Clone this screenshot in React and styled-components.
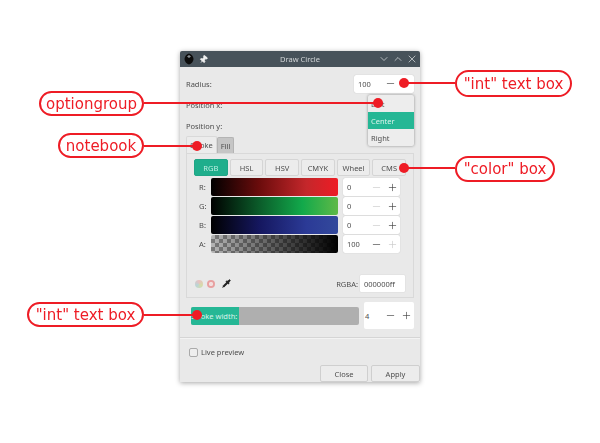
import React from "react";
import styled, { createGlobalStyle } from "styled-components";
import { Minus, Plus, ChevronDown, ChevronUp, X, Pin, Pipette } from "lucide-react";

const Global = createGlobalStyle`
  html, body { margin: 0; padding: 0; background: #fff; }
  body { font-family: "Noto Sans", sans-serif; }
`;
const Page = styled.div`
  position: relative; width: 600px; height: 443px; overflow: hidden; background: #fff;
  padding: 51px 0 0 180px; box-sizing: border-box;
`;
const Win = styled.div`
  width: 240px; height: 331px; background: #e9e9e9; color: #4e4e4e; font-size: 7.5px;
  box-shadow: 0 1px 5px rgba(0,0,0,.35); border-radius: 2px 2px 0 0;
  display: flex; flex-direction: column; filter: blur(.25px);
`;
const TitleBar = styled.div`
  height: 16px; flex: none; background: #47525a; color: #d3d6d8; display: grid;
  grid-template-columns: 60px 1fr 60px; align-items: center; border-radius: 2px 2px 0 0;
`;
const TitleLeft = styled.div`display: flex; align-items: center; gap: 5px; padding-left: 4px; color: #f2f2f2;`;
const Title = styled.div`text-align: center;`;
const TitleRight = styled.div`display: flex; justify-content: flex-end; gap: 2px; padding-right: 2px; color: #e3e5e6;`;
const Logo = styled.svg`width: 10px; height: 12px; display: block;`;
const Form = styled.div`padding: 6px 6px 0; position: relative;`;
const Row = styled.div`height: 21px; display: flex; align-items: center; justify-content: space-between;`;
const Spin = styled.div`
  width: ${p => p.$w || 60}px; height: ${p => p.$h || 18}px; background: #fff; display: flex; align-items: center; box-sizing: border-box;
  padding-left: ${p => p.$flat ? 1 : 4}px; border-radius: 2px; box-shadow: ${p => p.$flat ? "none" : "0 0 1px rgba(0,0,0,.25)"}; flex: none;
`;
const SpinValue = styled.span`flex: 1;`;
const SpinBtn = styled.span`
  width: 16px; display: flex; justify-content: center; color: ${p => p.$off ? "#c8c8c8" : "#3f3f3f"};
`;
const Popup = styled.div`
  position: absolute; left: 188px; top: 28px; width: 46px; height: 51px; background: #ededed;
  box-shadow: 0 0 3px rgba(0,0,0,.4); border-radius: 2px; display: flex; flex-direction: column;
`;
const PopItem = styled.div`
  flex: 1; display: flex; align-items: center; padding-left: 3px;
  background: ${p => p.$on ? "#25b795" : "transparent"}; color: ${p => p.$on ? "#d9f3ec" : "#4e4e4e"};
`;
const Tabs = styled.div`display: flex; align-items: flex-end; height: 17px;`;
const Tab = styled.div`
  width: ${p => p.$w}px; height: ${p => p.$on ? 17 : 16}px; box-sizing: border-box; display: flex; align-items: center; justify-content: center;
  background: ${p => p.$on ? "#ececec" : "#c5c5c5"}; border: 1px solid ${p => p.$on ? "#d9d9d9" : "#b4b4b4"}; border-bottom: none; border-radius: 2px 2px 0 0;
`;
const Frame = styled.div`
  height: 145px; box-sizing: border-box; border: 1px solid #d9d9d9; padding: 5px 7px 0;
`;
const Seg = styled.div`display: flex; gap: 2px; height: 17px;`;
const SegBtn = styled.div`
  width: 34px; box-sizing: border-box; display: flex; align-items: center; justify-content: center; border-radius: 2px;
  background: ${p => p.$on ? "#1fae8c" : "#ececec"}; color: ${p => p.$on ? "#bfeee2" : "#4e4e4e"};
  border: 1px solid ${p => p.$on ? "#1fa586" : "#d5d5d5"};
`;
const Channels = styled.div`display: flex; flex-direction: column; gap: 1px; margin-top: 2px;`;
const Channel = styled.div`display: flex; align-items: center; height: 18px; width: 206px;`;
const ChannelLabel = styled.span`width: 17px; flex: none; padding-left: 5px; box-sizing: border-box;`;
const Bar = styled.div`
  width: 127px; height: 18px; margin-right: 5px; flex: none; border-radius: 2px; background: ${p => p.$bg};
`;
const Foot = styled.div`display: flex; align-items: center; height: 17px; margin-top: 22px; width: 211px; padding-left: 1px; box-sizing: border-box;`;
const Dot = styled.span`
  width: 8px; height: 8px; border-radius: 50%; margin-right: ${p => p.$mr}px; flex: none;
  background: ${p => p.$bg};
`;
const RgbaLabel = styled.span`margin-left: auto; margin-right: 2px;`;
const RgbaInput = styled.div`
  width: 45px; height: 17px; box-sizing: border-box; background: #fff; display: flex; align-items: center; padding-left: 4px; border-radius: 1px; box-shadow: 0 0 1px rgba(0,0,0,.25);
`;
const StrokeRow = styled.div`display: flex; align-items: center; height: 27px; gap: 5px; padding: 4px 6px 0 11px; box-sizing: content-box;`;
const Stroke = styled.div`
  width: 168px; height: 18px; background: #afafaf; border-radius: 2px; overflow: hidden; flex: none; display: flex;
`;
const StrokeFill = styled.div`
  width: 48px; background: #25b795; color: #d9f3ec; display: flex; align-items: center; white-space: nowrap; box-sizing: border-box;
`;
const Rule = styled.div`height: 1px; background: #d5d5d5; margin-top: 8px; box-shadow: 0 1px 0 #f3f3f3;`;
const Live = styled.label`display: flex; align-items: center; gap: 3px; padding: 9px 0 0 9px; height: 10px;`;
const Check = styled.span`width: 9px; height: 9px; box-sizing: border-box; border: 1px solid #aaa; border-radius: 2px; background: #eee;`;
const Actions = styled.div`display: flex; justify-content: flex-end; gap: 3px; margin-top: 8px;`;
const Btn = styled.div`
  width: ${p => p.$w}px; height: 17px; box-sizing: border-box; display: flex; align-items: center; justify-content: center;
  background: #ececec; border: 1px solid #cfcfcf; border-radius: 2px;
`;
const Pill = styled.div`
  position: absolute; box-sizing: border-box; border: 2px solid #ee1c25; border-radius: 14px; background: #fff; color: #ee1c25;
  font: 15px "DejaVu Sans", sans-serif; display: flex; align-items: center; justify-content: center; white-space: nowrap;
`;
const Leader = styled.div`position: absolute; height: 2px; background: #ee1c25;`;
const Marker = styled.div`position: absolute; width: 10px; height: 10px; border-radius: 50%; background: #ee1c25;`;

const Spinner = ({ v, w, h, flat, minusOff, plusOff }) => (
  <Spin $w={w} $h={h} $flat={flat}>
    <SpinValue>{v}</SpinValue>
    <SpinBtn $off={minusOff}><Minus size={11} strokeWidth={1.4} /></SpinBtn>
    <SpinBtn $off={plusOff}><Plus size={11} strokeWidth={1.4} /></SpinBtn>
  </Spin>
);

const checks = "linear-gradient(90deg, rgba(0,0,0,0), #000 100%), repeating-conic-gradient(#7a7a7a 0 25%, #b5b5b5 0 50%) 0 0 / 8px 8px";
const channels = [
  { l: "R", v: 0, bg: "linear-gradient(90deg,#000,#6b0c0c 38%,#c4272b 75%,#ee1c25)", mo: true },
  { l: "G", v: 0, bg: "linear-gradient(90deg,#000,#0b5c2a 38%,#12a94b 72%,#5fb947)", mo: true },
  { l: "B", v: 0, bg: "linear-gradient(90deg,#000,#15175f 38%,#2b3a96 75%,#33499c)", mo: true },
  { l: "A", v: 100, bg: checks, po: true },
];
const callouts = [
  { t: '"int" text box', x: 455, y: 70, w: 117, h: 27, lx: 404, lw: 51, dy: 83 },
  { t: "optiongroup", x: 39, y: 91, w: 105, h: 25, lx: 144, lw: 234, dy: 103, dx: 378 },
  { t: "notebook", x: 58, y: 133, w: 86, h: 25, lx: 144, lw: 53, dy: 146, dx: 197 },
  { t: '"color" box', x: 455, y: 156, w: 100, h: 26, lx: 404, lw: 51, dy: 168 },
  { t: '"int" text box', x: 27, y: 302, w: 117, h: 25, lx: 144, lw: 53, dy: 315, dx: 197 },
];

export default function App() {
  return (
    <Page>
      <Global />
      <Win>
        <TitleBar>
          <TitleLeft>
            <Logo viewBox="0 0 10 12">
              <path d="M5 0.5C7.5 1 9.5 3.5 9.5 6S7.5 11 5 11.5C2.5 11 .5 8.5 .5 6S2.5 1 5 .5Z" fill="#0c0c0c" />
              <path d="M3 3.5 5 2l2 1.5L5 5Z" fill="#8a9095" />
            </Logo>
            <Pin size={9} fill="currentColor" style={{ transform: "rotate(40deg)" }} />
          </TitleLeft>
          <Title>Draw Circle</Title>
          <TitleRight>
            <ChevronDown size={12} strokeWidth={1.4} />
            <ChevronUp size={12} strokeWidth={1.4} />
            <X size={12} strokeWidth={1.4} />
          </TitleRight>
        </TitleBar>
        <Form>
          <Row>
            <span>Radius:</span>
            <Spinner v={100} w={60} />
          </Row>
          <Row><span>Position x:</span></Row>
          <Row><span>Position y:</span></Row>
          <Popup>
            <PopItem>Left</PopItem>
            <PopItem $on>Center</PopItem>
            <PopItem>Right</PopItem>
          </Popup>
          <Tabs>
            <Tab $w={31} $on>Stroke</Tab>
            <Tab $w={17}>Fill</Tab>
          </Tabs>
          <Frame>
            <Seg>
              <SegBtn $on>RGB</SegBtn>
              <SegBtn>HSL</SegBtn>
              <SegBtn>HSV</SegBtn>
              <SegBtn>CMYK</SegBtn>
              <SegBtn>Wheel</SegBtn>
              <SegBtn>CMS</SegBtn>
            </Seg>
            <Channels>
              {channels.map(c => (
                <Channel key={c.l}>
                  <ChannelLabel>{c.l}:</ChannelLabel>
                  <Bar $bg={c.bg} />
                  <Spinner v={c.v} w={57} minusOff={c.mo} plusOff={c.po} />
                </Channel>
              ))}
            </Channels>
            <Foot>
              <Dot $bg="conic-gradient(#e9c0c0,#d6dca8,#b9d5d8,#e9c0c0)" $mr={4} />
              <Dot $bg="radial-gradient(circle,#f2dede 35%,#e8a0a0 40%)" $mr={7} />
              <Pipette size={9} color="#222" fill="#222" />
              <RgbaLabel>RGBA:</RgbaLabel>
              <RgbaInput>000000ff</RgbaInput>
            </Foot>
          </Frame>
        </Form>
        <StrokeRow>
          <Stroke><StrokeFill>Stroke width:</StrokeFill></Stroke>
          <Spinner v={4} w={50} h={27} flat />
        </StrokeRow>
        <Rule />
        <Live><Check /> Live preview</Live>
        <Actions>
          <Btn $w={48}>Close</Btn>
          <Btn $w={49}>Apply</Btn>
        </Actions>
      </Win>
      {callouts.map(c => (
        <React.Fragment key={c.t + c.x}>
          <Leader style={{ left: c.lx, top: c.dy - 1, width: c.lw }} />
          <Marker style={{ left: (c.dx ?? c.lx) - 5, top: c.dy - 5 }} />
          <Pill style={{ left: c.x, top: c.y, width: c.w, height: c.h }}>{c.t}</Pill>
        </React.Fragment>
      ))}
    </Page>
  );
}
